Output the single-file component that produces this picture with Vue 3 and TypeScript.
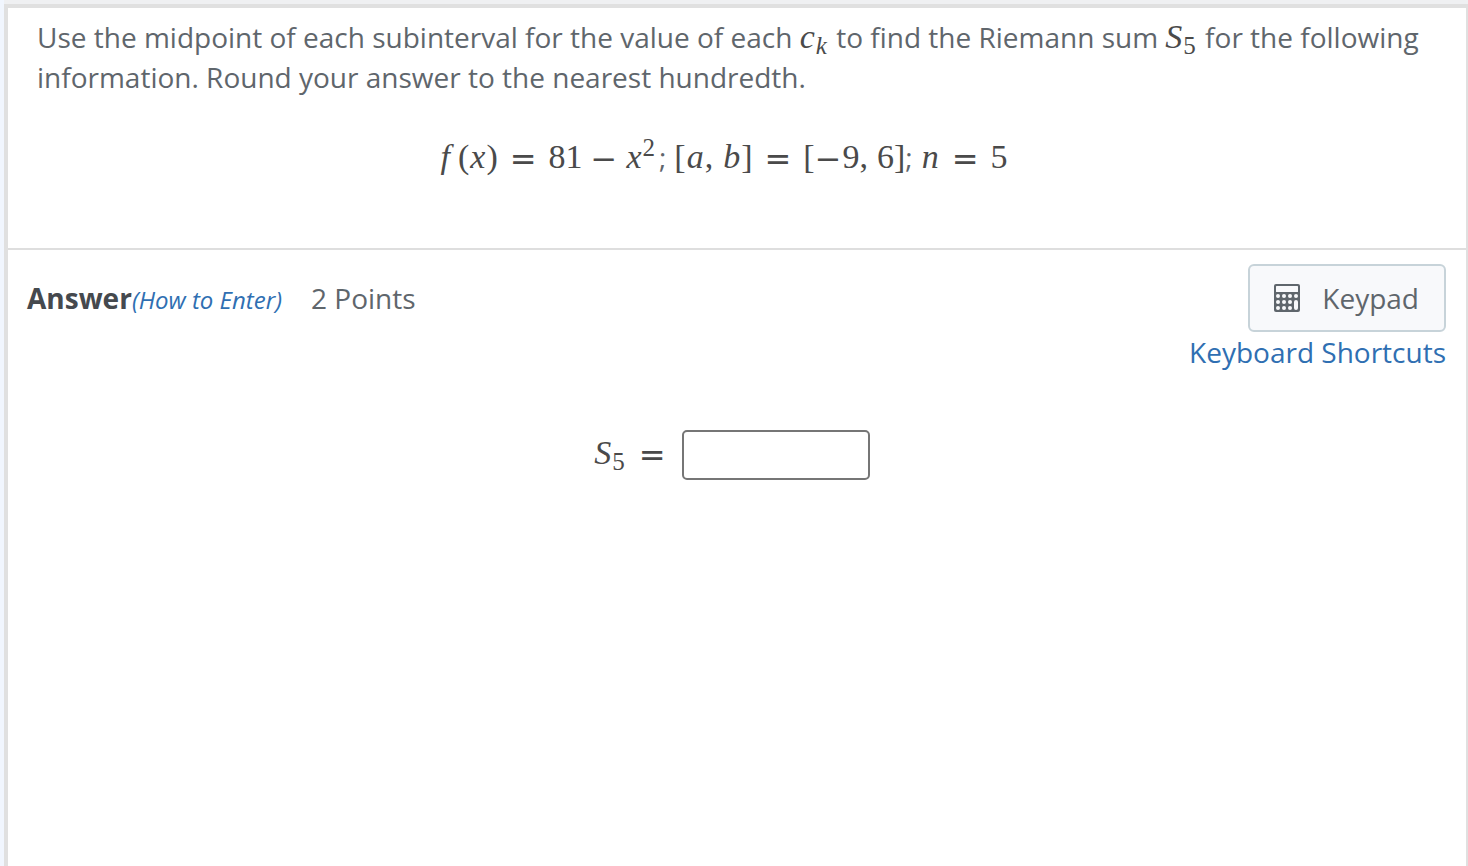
<script setup lang="ts">
import { ref } from 'vue'

const answer = ref('')
const columns: number[] = [4, 10, 16, 22]
const rows: number[] = [12, 18, 24]
const keys = rows.flatMap((y, r) =>
  columns.filter((_, c) => !(c === 3 && r > 0)).map((x) => ({ x, y })),
)
</script>

<template>
  <main class="page">
    <div class="card">
      <section class="question">
        <p class="prompt">
          Use the midpoint of each subinterval for the value of each
          <span class="math"><i>c</i><sub><i>k</i></sub></span> to find the Riemann sum
          <span class="math"><i>S</i><sub>5</sub></span> for the following information. Round your
          answer to the nearest hundredth.
        </p>
        <p class="formula">
          <span class="math"><i class="fn">f</i>(<i>x</i>)<span class="op rel">=</span>81<span class="op bin">−</span><i>x</i><sup>2</sup></span><span class="semi">;</span><span class="math">[<i>a</i><span class="comma">,</span><i>b</i>]<span class="op rel">=</span>[<span class="op neg">−</span>9<span class="comma">,</span>6]</span><span class="semi">;</span><span class="math"><i>n</i><span class="op rel">=</span>5</span>
        </p>
      </section>
      <section class="answer">
        <header class="bar">
          <div class="heading">
            <h2>Answer</h2><a class="how" href="#">(How to Enter)</a>
            <span class="points">2 Points</span>
          </div>
          <div class="tools">
            <button class="keypad" type="button">
              <svg width="26" height="28" viewBox="0 0 26 28" aria-hidden="true">
                <rect width="26" height="28" rx="2" fill="#5f666c" />
                <rect x="2" y="2" width="22" height="6" rx="0.5" fill="#f8f9fb" />
                <circle v-for="(k, i) in keys" :key="i" :cx="k.x" :cy="k.y" r="2" fill="#f8f9fb" />
                <rect x="20" y="16" width="4" height="10" rx="2" fill="#f8f9fb" />
              </svg>
              Keypad
            </button>
            <a class="shortcuts" href="#">Keyboard Shortcuts</a>
          </div>
        </header>
        <div class="entry">
          <label class="math" for="sum"><i>S</i><sub>5</sub><span class="op rel">=</span></label>
          <input id="sum" v-model="answer" type="text" autocomplete="off" />
        </div>
      </section>
    </div>
  </main>
</template>

<style>
body {
  background: #f1f6fe;
}
</style>

<style scoped>
.page {
  box-sizing: border-box;
  min-height: 100vh;
  margin-left: 4px;
  border-top: 4px solid #eff0f2;
  display: flex;
  font: 28px/40px "Open Sans", "Noto Sans", sans-serif;
  color: #5f666c;
}
.card {
  flex: 1;
  border: solid #e0e0e0;
  border-width: 4px 2px 0 4px;
  background: #fff;
}
.question {
  padding: 9px 29px 71px;
  border-bottom: 2px solid #dedede;
}
p {
  margin: 0;
}
.math {
  font-family: "Liberation Serif", serif;
  font-size: 34px;
  line-height: 1px;
  color: #4a4a4a;
  white-space: nowrap;
}
sub,
sup {
  font-size: 25px;
  line-height: 1px;
}
sub {
  margin: 0 2px 0 1px;
  vertical-align: -6px;
}
sup {
  margin-right: 4px;
  vertical-align: 12px;
}
.formula {
  margin-top: 40px;
  padding-right: 28px;
  text-align: center;
}
.formula i {
  margin: 0 1px;
}
.formula .fn {
  margin: 0 8px 0 2px;
}
.op {
  font-family: "DejaVu Sans", sans-serif;
  font-size: 32px;
  line-height: 1px;
  vertical-align: -2px;
}
.rel {
  margin: 0 12px;
}
.bin {
  margin: 0 8px;
}
.neg {
  margin-right: 1px;
}
.comma {
  margin-right: 9px;
}
.semi {
  margin-right: 8px;
}
.bar {
  display: flex;
  justify-content: space-between;
  padding: 14px 20px 0 19px;
}
.heading {
  display: flex;
  align-items: baseline;
  padding-top: 14px;
}
h2 {
  margin: 0;
  font-size: 28px;
  line-height: 40px;
  color: #45494e;
}
a {
  color: #2f6fb2;
  text-decoration: none;
}
.how {
  font-size: 24px;
  font-style: italic;
}
.points {
  margin-left: 29px;
}
.tools {
  display: flex;
  flex-direction: column;
  align-items: flex-end;
}
.keypad {
  display: flex;
  align-items: center;
  gap: 22px;
  height: 68px;
  padding: 0 25px 0 24px;
  border: 2px solid #c7d3d9;
  border-radius: 6px;
  background: #f8f9fb;
  font: inherit;
  color: inherit;
}
.entry {
  display: flex;
  justify-content: center;
  align-items: center;
  gap: 4px;
  padding: 58px 10px 0 0;
}
.entry .math {
  padding-bottom: 4px;
  line-height: 40px;
}
input {
  box-sizing: border-box;
  width: 188px;
  height: 50px;
  padding: 0 8px;
  border: 2px solid #767676;
  border-radius: 5px;
  background: #fff;
  font: inherit;
  color: inherit;
}
</style>
